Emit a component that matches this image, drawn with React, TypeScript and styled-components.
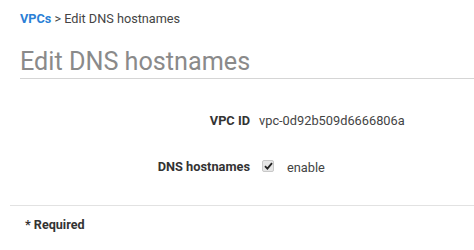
import React from "react";
import styled, { createGlobalStyle } from "styled-components";

const Global = createGlobalStyle`
  html, body { margin: 0; padding: 0; background: #fff; }
  body { font-family: Roboto, "Liberation Sans", Arial, sans-serif; color: #444; }
`;

const Page = styled.div`
  width: 474px;
  height: 250px;
  overflow: hidden;
  display: flex;
  flex-direction: column;
`;

const Breadcrumb = styled.div`
  padding: 11px 0 0 20px;
  font-size: 12.7px;
  line-height: 16px;
  color: #444;
`;

const Crumb = styled.a`
  color: #2a7fd6;
  font-weight: 700;
  text-decoration: none;
`;

const Title = styled.h1`
  margin: 22px 0 0 20px;
  padding: 0 0 3px 0;
  font-size: 25.2px;
  line-height: 26px;
  font-weight: 400;
  color: #8a8a8a;
  border-bottom: 1px solid #d5d5d5;
`;

const Form = styled.div`
  display: flex;
  flex-direction: column;
  gap: 26px;
  padding-top: 33px;
`;

const Row = styled.div`
  display: grid;
  grid-template-columns: 250px 1fr;
  column-gap: 9px;
  align-items: center;
  font-size: 12.8px;
  line-height: 18px;
`;

const Label = styled.div`
  text-align: right;
  font-weight: 700;
  color: #333;
`;

const Value = styled.div`
  display: flex;
  align-items: center;
  color: #444;
`;

const Check = styled.span`
  width: 10px;
  height: 10px;
  margin: 0 13px 1px 3px;
  border: 1px solid #c8c8c8;
  border-radius: 2px;
  background: #e6e6e6;
  display: inline-flex;
  align-items: center;
  justify-content: center;
`;

const EnableText = styled.span`
  padding-top: 3px;
`;

const Footer = styled.div`
  margin: 28px 0 0 10px;
  border-top: 1px solid #e2e2e2;
  padding: 11px 0 0 15px;
  font-size: 12.6px;
  line-height: 16px;
  font-weight: 700;
  color: #333;
`;

export default function App() {
  return (
    <Page>
      <Global />
      <Breadcrumb>
        <Crumb href="#">VPCs</Crumb> &gt; Edit DNS hostnames
      </Breadcrumb>
      <Title>Edit DNS hostnames</Title>
      <Form>
        <Row>
          <Label>VPC ID</Label>
          <Value>vpc-0d92b509d6666806a</Value>
        </Row>
        <Row>
          <Label>DNS hostnames</Label>
          <Value>
            <Check>
              <svg width="9" height="8" viewBox="0 0 9 8">
                <path d="M1 4.2 L3.4 6.6 L8 1.2" fill="none" stroke="#222" strokeWidth="1.8" />
              </svg>
            </Check>
            <EnableText>enable</EnableText>
          </Value>
        </Row>
      </Form>
      <Footer>* Required</Footer>
    </Page>
  );
}
